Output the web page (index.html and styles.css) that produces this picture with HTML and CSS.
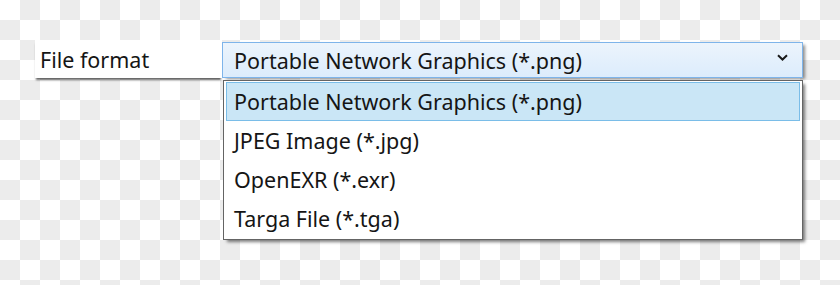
FILE: index.html
```html
<!DOCTYPE html>
<html>
<head>
<meta charset="utf-8">
<link rel="stylesheet" href="styles.css">
</head>
<body>
<div class="page">
  <div class="row">
    <div class="label">File format</div>
    <div class="combo-wrap">
      <div class="combo">
        <span class="combo-text">Portable Network Graphics (*.png)</span>
        <svg class="chevron" width="11" height="7" viewBox="0 0 11 7"><path d="M1 1.2 L5.5 5.5 L10 1.2" fill="none" stroke="#1a1a1a" stroke-width="2"/></svg>
      </div>
      <ul class="dropdown">
        <li class="item selected">Portable Network Graphics (*.png)</li>
        <li class="item">JPEG Image (*.jpg)</li>
        <li class="item">OpenEXR (*.exr)</li>
        <li class="item">Targa File (*.tga)</li>
      </ul>
    </div>
  </div>
</div>
</body>
</html>
```
FILE: styles.css
```css
html, body {
  margin: 0;
  padding: 0;
}
body {
  width: 840px;
  height: 285px;
  overflow: hidden;
  background: repeating-conic-gradient(#ececec 0 25%, #ffffff 0 50%) 0 0 / 40px 40px;
  font-family: "Noto Sans", "Open Sans", sans-serif;
  font-size: 21.5px;
  color: #151515;
}
.page {
  padding: 40px 0 0 35px;
}
.row {
  display: flex;
  align-items: flex-end;
}
.label {
  width: 187px;
  height: 38px;
  box-sizing: border-box;
  padding-left: 5px;
  background: #fff;
  display: flex;
  align-items: center;
  box-shadow: 0 3px 2px -1px rgba(0, 0, 0, 0.6);
}
.combo-wrap {
  position: relative;
}
.combo {
  width: 581px;
  height: 36px;
  box-sizing: border-box;
  border: 1px solid #7eb4ea;
  background: linear-gradient(#ecf4fc, #dcecfc);
  display: flex;
  align-items: center;
  justify-content: space-between;
  padding: 0 14px 0 11px;
  box-shadow: 3px 2px 3px -1px rgba(0, 0, 0, 0.45);
}
.chevron {
  display: block;
  margin-top: -6px;
}
.dropdown {
  position: absolute;
  left: 1px;
  top: 38px;
  width: 580px;
  box-sizing: border-box;
  margin: 0;
  padding: 1px 2px 1px 2px;
  list-style: none;
  background: #fff;
  border: 1px solid #646464;
  box-shadow: 3px 3px 3px -1px rgba(0, 0, 0, 0.5);
}
.item {
  height: 39px;
  box-sizing: border-box;
  border: 1px solid transparent;
  padding-left: 7px;
  display: flex;
  align-items: center;
}
.item.selected {
  background: #cae6f6;
  border-color: #7abde8;
}
```
